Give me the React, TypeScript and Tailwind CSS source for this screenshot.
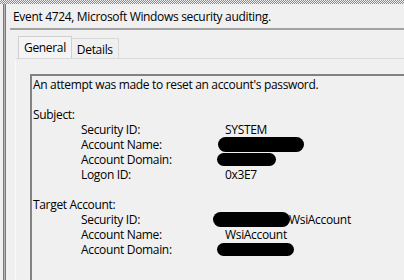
import React from "react";

const Row = ({ label, children }: { label: string; children?: React.ReactNode }) => (
  <div className="flex h-[15px] items-center">
    <div className="w-[192px] shrink-0 pl-[48px]">{label}</div>
    <div className="flex items-center whitespace-nowrap">{children}</div>
  </div>
);

const Blob = ({ w, h, ml }: { w: number; h: number; ml: number }) => (
  <span
    className="inline-block rounded-full bg-black"
    style={{ width: w, height: h, marginLeft: ml }}
  />
);

export default function App() {
  return (
    <div
      className="relative h-[280px] w-[404px] overflow-hidden bg-[#f0f0f0] text-[12px] leading-[15px] tracking-[-0.33px] text-black"
      style={{ fontFamily: '"Open Sans", "Noto Sans", sans-serif' }}
    >
      {/* hatched top edge */}
      <div className="h-[4px] bg-[repeating-conic-gradient(#8c8c8c_0%_25%,#f0f0f0_0%_50%)] bg-[length:2px_2px]" />
      <div className="flex h-[276px]">
        <div className="w-[3px] shrink-0" />
        <div className="w-[1px] shrink-0 bg-[#7c7c7c]" />
        <div className="w-[1px] shrink-0 bg-[#b4b4b4]" />
        <div className="w-[1px] shrink-0 bg-[#7c7c7c]" />
        <div className="flex min-w-0 flex-1 flex-col">
          {/* title */}
          <div className="pl-[7px] pt-[5px] whitespace-nowrap">
            Event 4724, Microsoft Windows security auditing.
          </div>
          <div className="ml-[4px] mt-[4px] h-[2px] bg-[#a3a3a3]" />
          {/* tabs */}
          <div className="mt-[6px] flex items-end pl-[12px]">
            <div className="flex h-[22px] items-start border-x border-t border-[#d0d0d0] bg-[#f4f4f4] px-[5px] pt-[3px]">
              General
            </div>
            <div className="flex h-[20px] items-start border-r border-t border-[#d9d9d9] bg-[#f0f0f0] px-[5px] pt-[3px]">
              Details
            </div>
          </div>
          {/* panel */}
          <div className="ml-[9px] flex-1 border-l border-t border-l-[#fafafa] border-t-[#d9d9d9] pl-[14px] pt-[15px]">
            <div className="h-full border-l-2 border-t-2 border-[#828282] pl-[1px] pt-[1px]">
              <div className="whitespace-nowrap">An attempt was made to reset an account's password.</div>
              <div className="h-[15px]" />
              <div>Subject:</div>
              <Row label="Security ID:">SYSTEM</Row>
              <Row label="Account Name:">
                <Blob w={86} h={15} ml={-7} />
              </Row>
              <Row label="Account Domain:">
                <Blob w={59} h={13} ml={-8} />
              </Row>
              <Row label="Logon ID:">0x3E7</Row>
              <div className="h-[15px]" />
              <div>Target Account:</div>
              <Row label="Security ID:">
                <Blob w={77} h={15} ml={-12} />
                <span className="ml-[-1px]">WsiAccount</span>
              </Row>
              <Row label="Account Name:">WsiAccount</Row>
              <Row label="Account Domain:">
                <Blob w={77} h={13} ml={-8} />
              </Row>
            </div>
          </div>
        </div>
      </div>
    </div>
  );
}
